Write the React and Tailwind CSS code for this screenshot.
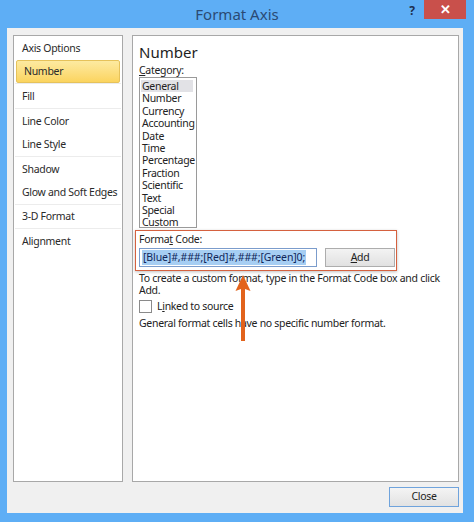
import React from "react";

const navGroups = [
  { items: ["Axis Options", "Number"], pad: false },
  { items: ["Fill"], pad: true },
  { items: ["Line Color", "Line Style"], pad: true },
  { items: ["Shadow", "Glow and Soft Edges"], pad: true },
  { items: ["3-D Format"], pad: false },
  { items: ["Alignment"], pad: true },
];

const categories = [
  "General",
  "Number",
  "Currency",
  "Accounting",
  "Date",
  "Time",
  "Percentage",
  "Fraction",
  "Scientific",
  "Text",
  "Special",
  "Custom",
];

function Sidebar() {
  return (
    <div className="w-[110px] shrink-0 bg-white border border-[#a8a8a8] pt-px px-px flex flex-col">
      {navGroups.map((group, gi) => (
        <div
          key={gi}
          className={
            (gi < navGroups.length - 1 ? "border-b border-[#ececec] " : "") + (group.pad ? "pt-px" : "")
          }
        >
          {group.items.map((item) => {
            const active = item === "Number";
            return (
              <div
                key={item}
                className={
                  "h-[23px] flex items-center pl-[7px] whitespace-nowrap text-[#2a2a2a] " +
                  (active
                    ? "mx-px rounded-[2px] border border-[#e6c25a] bg-gradient-to-b from-[#fdeaa0] to-[#fbd45e] pl-[6px]"
                    : "")
                }
              >
                {item}
              </div>
            );
          })}
        </div>
      ))}
    </div>
  );
}

function Arrow() {
  return (
    <svg className="absolute left-[235px] top-[274px]" width="16" height="68" viewBox="0 0 16 68">
      <path d="M8 1 L15.5 17 L10 15 L10 67 L6 67 L6 15 L0.5 17 Z" fill="#e2631c" />
    </svg>
  );
}

function NumberPane() {
  return (
    <div className="flex-1 bg-white border border-[#a8a8a8] pl-[6px] pt-[7px] text-[#222]">
      <div className="text-[15px] leading-[18px] tracking-normal text-[#1e1e1e]">Number</div>
      <div className="mt-[3px] leading-[13px]">
        <span className="underline">C</span>ategory:
      </div>
      <div className="w-[58px] h-[151px] border border-[#9a9a9a] pt-[2px] px-px overflow-hidden">
        {categories.map((c, i) => (
          <div
            key={c}
            className={"leading-[12.4px] pl-px whitespace-nowrap " + (i === 0 ? "bg-[#e2e2e6] mr-[2px]" : "")}
          >
            {c}
          </div>
        ))}
      </div>
      <div className="-ml-[4px] mt-[2px] w-[262px] h-[41px] border border-[#d5613f] shadow-[0_1px_3px_rgba(0,0,0,0.25)] pl-[3px] pt-[2px]">
        <div className="leading-[13px]">
          Forma<span className="underline">t</span> Code:
        </div>
        <div className="mt-[2px] flex items-center gap-[8px]">
          <div className="w-[178px] h-[19px] border border-[#7b9ccc] bg-white flex items-center px-[2px] overflow-hidden">
            <span className="bg-[#a6cef3] text-[#10275a] leading-[15px] px-px whitespace-nowrap tracking-[-0.12px]">
              [Blue]#,###;[Red]#,###;[Green]0;
            </span>
          </div>
          <div className="w-[70px] h-[19px] border border-[#adadad] bg-gradient-to-b from-[#f3f3f3] to-[#e1e1e1] flex items-center justify-center">
            <span className="underline">A</span>dd
          </div>
        </div>
      </div>
      <div className="mt-[1px] leading-[12px] w-[318px]">
        To create a custom format, type in the Format Code box and click Add.
      </div>
      <div className="mt-[4px] flex items-center gap-[5px] h-[13px]">
        <div className="w-[13px] h-[13px] border border-[#8a8a8a] bg-white" />
        <span>
          L<span className="underline">i</span>nked to source
        </span>
      </div>
      <div className="mt-[4px] leading-[13px]">General format cells have no specific number format.</div>
    </div>
  );
}

export default function App() {
  return (
    <div className="relative w-[474px] h-[522px] bg-[#5eaef5] flex flex-col font-['Noto_Sans',sans-serif] overflow-hidden">
      <div className="h-[28px] grid grid-cols-[1fr_auto_1fr] items-start">
        <div />
        <div className="pt-[4px] text-[15px] leading-[20px] text-[#2b4a73]">Format Axis</div>
        <div className="flex justify-end items-start pr-[8px]">
          <span className="mt-[2px] mr-[9px] text-[12px] font-bold text-[#1d2f4f]">?</span>
          <div className="w-[42px] h-[19px] bg-[#c9504b] flex items-center justify-center text-white text-[13px] font-bold">
            ✕
          </div>
        </div>
      </div>
      <div className="ml-[7px] mr-[11px] h-[485px] bg-[#f0f0f0] pt-[7px] pl-[6px] pr-[4px] flex flex-col text-[10.5px] tracking-[-0.3px]">
        <div className="h-[447px] flex gap-[9px]">
          <Sidebar />
          <NumberPane />
        </div>
        <div className="flex justify-end mt-[5px]">
          <div className="w-[70px] h-[20px] border border-[#6fa3dc] bg-gradient-to-b from-[#f4f4f4] to-[#e2e2e2] flex items-center justify-center text-[#222]">
            Close
          </div>
        </div>
      </div>
      <Arrow />
    </div>
  );
}
